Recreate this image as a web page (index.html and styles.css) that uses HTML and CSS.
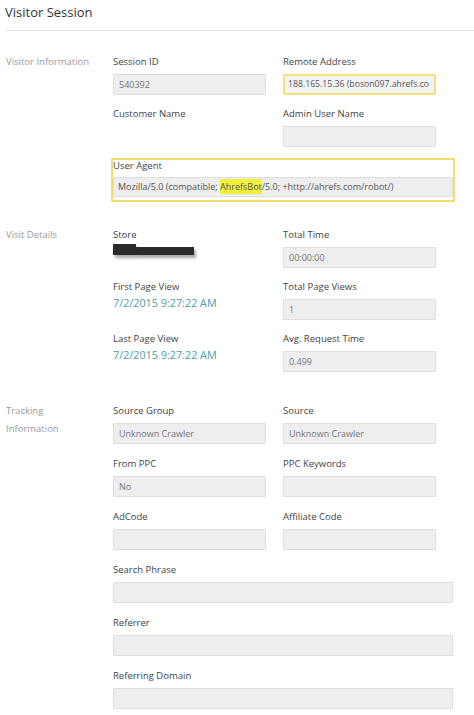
FILE: index.html
```html
<!DOCTYPE html>
<html>
<head>
<meta charset="utf-8">
<link rel="stylesheet" href="styles.css">
</head>
<body>
<div class="page">
  <h1 class="title">Visitor Session</h1>

  <section class="section s1">
    <div class="sec-label">Visitor Information</div>
    <div class="fields">
      <div class="field">
        <label>Session ID</label>
        <div class="input">540392</div>
      </div>
      <div class="field">
        <label>Remote Address</label>
        <div class="input hl dark">188.165.15.36 (boson097.ahrefs.co</div>
      </div>
      <div class="field">
        <label>Customer Name</label>
      </div>
      <div class="field">
        <label>Admin User Name</label>
        <div class="input"></div>
      </div>
      <div class="field wide agent">
        <label>User Agent</label>
        <div class="input dark">Mozilla/5.0 (compatible; <mark>AhrefsBot</mark>/5.0; +http://ahrefs.com/robot/)</div>
      </div>
    </div>
  </section>

  <section class="section s2">
    <div class="sec-label">Visit Details</div>
    <div class="fields">
      <div class="field">
        <label>Store</label>
        <div class="redact"><span class="r1"></span><span class="r2"></span></div>
      </div>
      <div class="field">
        <label>Total Time</label>
        <div class="input">00:00:00</div>
      </div>
      <div class="field">
        <label>First Page View</label>
        <div class="date">7/2/2015 9:27:22 AM</div>
      </div>
      <div class="field">
        <label>Total Page Views</label>
        <div class="input">1</div>
      </div>
      <div class="field">
        <label>Last Page View</label>
        <div class="date">7/2/2015 9:27:22 AM</div>
      </div>
      <div class="field">
        <label>Avg. Request Time</label>
        <div class="input">0.499</div>
      </div>
    </div>
  </section>

  <section class="section s3">
    <div class="sec-label">Tracking<br>Information</div>
    <div class="fields">
      <div class="field">
        <label>Source Group</label>
        <div class="input">Unknown Crawler</div>
      </div>
      <div class="field">
        <label>Source</label>
        <div class="input">Unknown Crawler</div>
      </div>
      <div class="field">
        <label>From PPC</label>
        <div class="input">No</div>
      </div>
      <div class="field">
        <label>PPC Keywords</label>
        <div class="input"></div>
      </div>
      <div class="field">
        <label>AdCode</label>
        <div class="input"></div>
      </div>
      <div class="field">
        <label>Affiliate Code</label>
        <div class="input"></div>
      </div>
      <div class="field wide">
        <label>Search Phrase</label>
        <div class="input"></div>
      </div>
      <div class="field wide">
        <label>Referrer</label>
        <div class="input"></div>
      </div>
      <div class="field wide">
        <label>Referring Domain</label>
        <div class="input"></div>
      </div>
    </div>
  </section>
</div>
</body>
</html>
```

FILE: styles.css
```css
html, body {
  margin: 0;
  padding: 0;
  background: #ffffff;
}

body {
  font-family: "Open Sans", "Noto Sans", sans-serif;
  color: #444444;
  font-size: 9.5px;
}

.page {
  padding-left: 5px;
  width: 469px;
}

.title {
  margin: 0;
  font-size: 13px;
  font-weight: 400;
  color: #333333;
  height: 30px;
  line-height: 24px;
  border-bottom: 1px solid #e6e6e6;
}

.section {
  display: flex;
}

.s1 { padding-top: 24px; }
.s2 { padding-top: 28px; }
.s3 { padding-top: 32px; }

.sec-label {
  width: 107px;
  padding-left: 1px;
  flex: none;
  color: #9a9a9a;
  font-size: 9.5px;
  line-height: 18px;
  margin-top: -2px;
}

.fields {
  display: grid;
  grid-template-columns: 153px 153px;
  column-gap: 17px;
  row-gap: 12px;
  align-content: start;
}

.s3 .fields {
  row-gap: 13px;
}

.field {
  display: flex;
  flex-direction: column;
  min-height: 40px;
}

.field label {
  display: block;
  line-height: 14px;
  height: 14px;
  margin-bottom: 5px;
  color: #444444;
  white-space: nowrap;
}

.field.wide {
  grid-column: 1 / -1;
  width: 340px;
}

.input {
  box-sizing: border-box;
  height: 21px;
  background: #eeeeee;
  border: 1px solid #dedede;
  border-radius: 1px;
  padding: 0 5px;
  line-height: 19px;
  font-size: 9px;
  color: #777777;
  white-space: nowrap;
  overflow: hidden;
}

.input.dark {
  color: #555555;
}

.input.hl {
  border: 2px solid #f2e17e;
  line-height: 17px;
  padding-left: 3px;
  background: #f3f3f3;
  font-size: 8.7px;
}

.agent {
  outline: 2px solid #f0de70;
  outline-offset: 0;
  margin-top: 1px;
}

.agent label {
  margin-top: -1px;
  margin-bottom: 4px;
}

.agent .input {
  height: 20px;
  line-height: 18px;
  padding-left: 4px;
}

mark {
  background: #eef03a;
  color: #555555;
  padding: 1px 0;
}

.date {
  font-size: 10.8px;
  line-height: 17px;
  color: #4d9ea3;
  margin-top: -5px;
}

.redact {
  display: flex;
  align-items: flex-end;
  margin-top: -3px;
}

.redact span {
  display: block;
  background: #2a2a2a;
  box-shadow: 2px 3px 3px rgba(0, 0, 0, 0.35);
}

.redact .r1 {
  width: 23px;
  height: 11px;
}

.redact .r2 {
  width: 58px;
  height: 8px;
}
```
